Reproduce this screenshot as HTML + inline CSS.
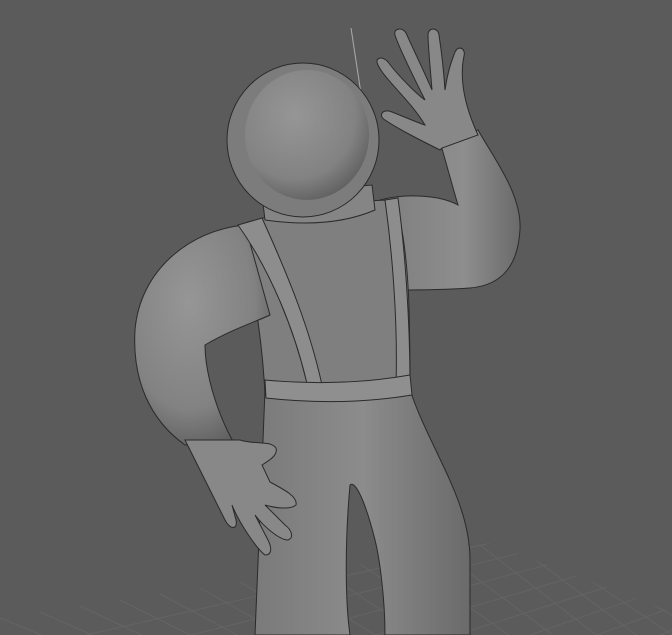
<!DOCTYPE html>
<html><head><style>
html,body{margin:0;padding:0;background:#5b5b5b;width:672px;height:635px;overflow:hidden}
</style></head><body>
<svg width="672" height="635" viewBox="0 0 672 635" xmlns="http://www.w3.org/2000/svg" style="display:block">
<defs>
<radialGradient id="g" cx="40%" cy="35%" r="70%"><stop offset="0" stop-color="#969696"/><stop offset="0.7" stop-color="#828282"/><stop offset="1" stop-color="#5e5e5e"/></radialGradient>
<linearGradient id="lg" x1="0" x2="1"><stop offset="0" stop-color="#7a7a7a"/><stop offset="0.5" stop-color="#8c8c8c"/><stop offset="1" stop-color="#6a6a6a"/></linearGradient>
<linearGradient id="ag" x1="0" x2="1"><stop offset="0" stop-color="#7e7e7e"/><stop offset="0.6" stop-color="#8e8e8e"/><stop offset="1" stop-color="#6a6a6a"/></linearGradient>
<clipPath id="gc"><polygon points="0,618 490,543 672,612 672,635 0,635"/></clipPath>
</defs>
<rect width="672" height="635" fill="#5b5b5b"/>
<g clip-path="url(#gc)" stroke="#646464" stroke-width="1" fill="none">
<path d="M-200,700 L490,543 M-150,720 L520,553 M-100,740 L550,564 M-50,760 L580,575 M0,780 L610,586 M50,800 L640,597 M100,820 L670,608 M150,840 L700,619"/>
<path d="M0,618 L200,700 M40,612 L240,700 M80,606 L280,700 M120,600 L320,700 M160,594 L360,700 M200,588 L400,700 M240,582 L440,700 M280,576 L480,700 M320,570 L520,700 M360,564 L560,700 M400,558 L600,700 M440,551 L640,700 M480,545 L680,700 M520,548 L710,690 M560,560 L740,680 M600,575 L770,670 M640,590 L800,660"/>
</g>
<line x1="351" y1="28" x2="362" y2="100" stroke="#aaa" stroke-width="1"/>
<!-- legs -->
<path d="M265,390 L410,390 C430,450 470,500 470,560 L470,635 L385,635 C385,600 380,560 375,540 C365,500 355,480 350,485 C345,540 345,600 350,635 L255,635 C258,560 262,470 265,390Z" fill="url(#lg)" stroke="#2a2a2a" stroke-width="1"/>
<!-- right arm -->
<path d="M380,200 C405,193 440,195 458,205 C452,185 446,162 440,142 L478,130 C495,160 522,195 520,230 C518,262 505,285 470,288 C440,290 415,290 400,290 Z" fill="url(#ag)" stroke="#2a2a2a"/>
<!-- raised hand -->
<path d="M440,150 C420,140 400,130 385,120 C378,116 382,108 392,112 C405,117 418,123 425,125 C410,100 385,80 378,65 C374,58 382,55 388,62 C400,78 418,95 425,100 C410,70 398,45 395,35 C393,28 403,27 406,33 C416,55 428,80 432,90 C430,65 428,45 428,35 C428,27 438,27 439,35 C442,55 444,75 445,90 C448,70 452,60 455,52 C458,45 466,48 464,56 C460,75 462,100 478,135 L442,148Z" fill="#888" stroke="#2a2a2a"/>
<!-- torso -->
<path d="M240,225 C300,205 360,200 395,200 C410,250 410,320 410,395 L265,395 C262,330 250,270 240,225Z" fill="#7f7f7f" stroke="#2a2a2a"/>
<!-- left arm -->
<path d="M245,225 C190,230 140,270 135,330 C132,380 150,420 185,445 L235,445 C215,410 205,370 205,345 C230,330 260,320 270,315 Z" fill="url(#g)" stroke="#2a2a2a"/>
<!-- left hand -->
<path d="M185,440 C200,470 215,500 225,520 C230,530 238,530 236,520 L232,505 C240,525 258,550 265,555 C272,555 272,548 268,540 L255,515 C265,528 280,540 288,540 C294,538 292,530 285,525 L265,505 C275,508 290,510 296,505 C298,497 285,490 270,482 L262,465 C270,460 278,455 276,448 C270,440 255,445 240,440 Z" fill="#888" stroke="#2a2a2a"/>
<!-- straps -->
<path d="M238,225 L262,218 C290,280 310,330 322,385 L308,388 C295,330 270,270 238,225Z" fill="#8d8d8d" stroke="#2a2a2a"/>
<path d="M385,200 L398,198 C405,250 410,320 410,385 L396,385 C398,320 392,250 385,200Z" fill="#8d8d8d" stroke="#2a2a2a"/>
<path d="M265,380 C320,385 370,382 410,375 L412,395 C370,402 320,404 266,398Z" fill="#8f8f8f" stroke="#2a2a2a"/>
<!-- collar -->
<path d="M262,195 L372,185 L375,210 C340,225 300,225 265,220Z" fill="#858585" stroke="#2a2a2a"/>
<!-- helmet -->
<ellipse cx="303" cy="140" rx="76" ry="77" fill="#7c7c7c" stroke="#2a2a2a"/>
<ellipse cx="307" cy="135" rx="62" ry="65" fill="url(#g)"/>
</svg>
</body></html>
